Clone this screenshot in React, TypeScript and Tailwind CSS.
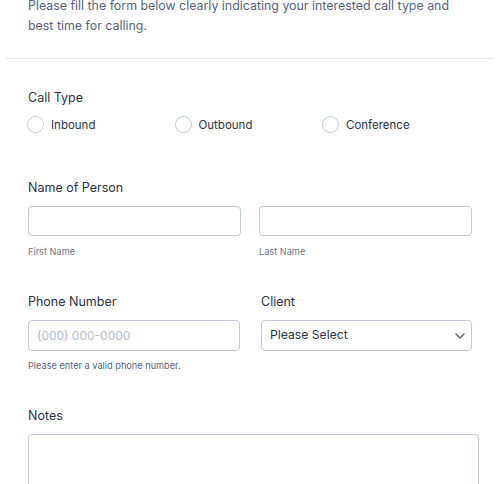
const radios = ["Inbound", "Outbound", "Conference"]

function Label({ children }: { children: React.ReactNode }) {
  return <div className="text-[12.5px] leading-[18px] font-normal text-[#2c3345]">{children}</div>
}

export default function App() {
  return (
    <div className="w-[500px] h-[484px] overflow-hidden bg-white font-['Inter',sans-serif] text-[#2c3345]">
      <div className="ml-[28px] w-[436px] mt-[-4px] text-[12.4px] leading-[20px] text-[#57647e]">
        Please fill the form below clearly indicating your interested call type and best time for calling.
      </div>

      <div className="mx-[6px] mt-[22px] border-t border-[#e3e5ea]" />

      <div className="px-[28px]">
        <div className="mt-[30px]">
          <Label>Call Type</Label>
          <div className="mt-[9px] flex">
            {radios.map((r) => (
              <div key={r} className="w-[148.5px] flex items-center -ml-px">
                <span className="w-[17px] h-[17px] rounded-full border border-[#c3cad8] bg-white" />
                <span className="ml-[7px] text-[11.5px] leading-[16px] text-[#2c3345]">{r}</span>
              </div>
            ))}
          </div>
        </div>

        <div className="mt-[46px]">
          <Label>Name of Person</Label>
          <div className="mt-[9px] grid grid-cols-[213px_213px] gap-x-[18px]">
            <div>
              <div className="h-[30px] rounded-[4px] border border-[#c3cad8]" />
              <div className="mt-[9px] text-[9.2px] leading-[14px] text-[#6f7888]">First Name</div>
            </div>
            <div>
              <div className="h-[30px] rounded-[4px] border border-[#c3cad8]" />
              <div className="mt-[9px] text-[9.2px] leading-[14px] text-[#6f7888]">Last Name</div>
            </div>
          </div>
        </div>

        <div className="mt-[34px] grid grid-cols-[212px_211px] gap-x-[21px]">
          <div>
            <Label>Phone Number</Label>
            <div className="mt-[9px] h-[31px] rounded-[4px] border border-[#c3cad8] flex items-center px-[8px] text-[12px] text-[#b6bdcc]">
              (000) 000-0000
            </div>
            <div className="mt-[8px] text-[9.2px] leading-[14px] text-[#57647e]">Please enter a valid phone number.</div>
          </div>
          <div>
            <Label>Client</Label>
            <div className="mt-[9px] h-[31px] rounded-[4px] border border-[#c3cad8] flex items-center justify-between pl-[8px] pr-[6px] text-[12.2px] text-[#2c3345]">
              <span>Please Select</span>
              <svg width="10" height="6" viewBox="0 0 10 6" fill="none">
                <path d="M1 1l4 4 4-4" stroke="#57647e" strokeWidth="1.4" strokeLinecap="round" strokeLinejoin="round" />
              </svg>
            </div>
          </div>
        </div>

        <div className="mt-[34px]">
          <Label>Notes</Label>
          <div className="mt-[9px] w-[451px] h-[100px] rounded-[4px] border border-[#c3cad8]" />
        </div>
      </div>
    </div>
  )
}
